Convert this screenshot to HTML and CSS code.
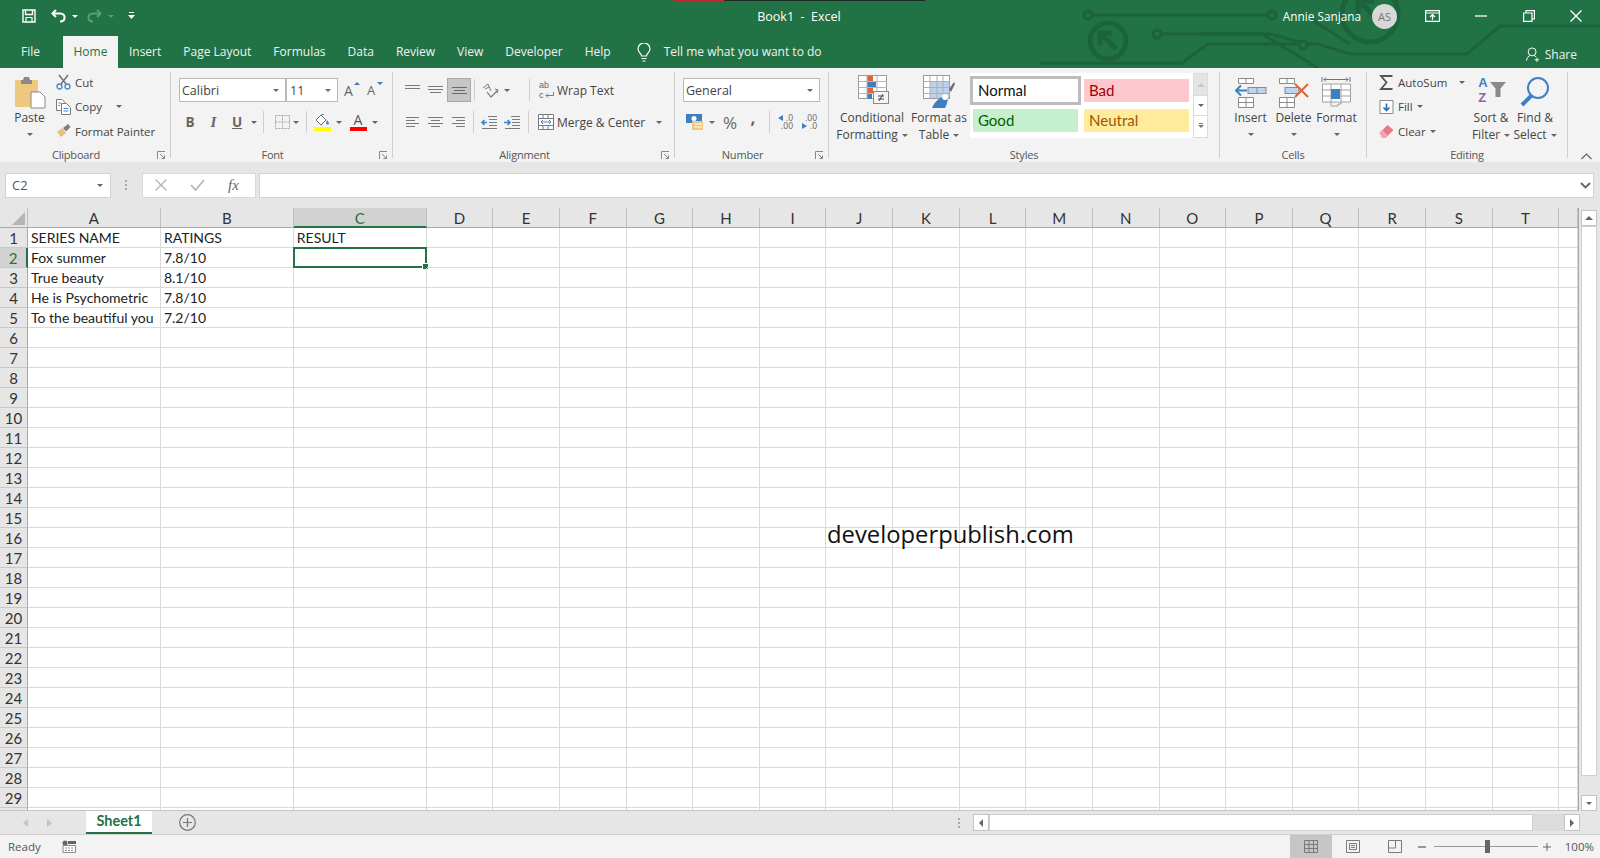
FILE: index.html
```html
<!DOCTYPE html>
<html lang="en">
<head>
    <meta charset="UTF-8">
    <title>Book1 - Excel</title>
    <link rel="stylesheet" href="styles.css">
</head>
<body>
<div class="app">
    <div class="top">
        <svg class="circuit" width="560" height="68" viewBox="1040 0 560 68" fill="none" stroke="#1d6339" stroke-width="3">
            <circle cx="1088" cy="15" r="4"/><path d="M1092 15H1268"/><circle cx="1272" cy="15" r="4"/>
            <circle cx="1157" cy="34" r="4"/><path d="M1161 34H1262L1318 68"/>
            <path d="M1040 63H1182L1208 44H1299"/><circle cx="1303" cy="45" r="4"/><path d="M1307 44H1318L1350 54H1467L1500 26H1600"/>
            <path d="M1200 34H1270L1300 42"/><path d="M1306 16L1350 44"/>
            <circle cx="1108" cy="41" r="18" stroke-width="5"/><path d="M1116 49L1102 35M1100 45V33H1112" stroke-width="5"/>
            <circle cx="1370" cy="14" r="28" stroke-width="5"/><path d="M1382 24L1362 4M1358 16V1H1374" stroke-width="5"/>
        </svg>

        <!-- Title bar -->
        <header class="titlebar">
            <div class="title-strip"></div>
            <div class="qat">
                <svg class="qat-save" width="14" height="14" viewBox="0 0 14 14" fill="none" stroke="#fff" stroke-width="1.4"><path d="M1 1H13V13H1Z"/><path d="M3.5 1V5.5H10.5V1"/><path d="M4 13V8.500H10V13" stroke-width="1.200"/></svg>
                <svg class="qat-undo" width="15" height="14" viewBox="0 0 15 14" fill="none" stroke="#fff" stroke-width="2"><path d="M5 1L1.500 4.500L5 8"/><path d="M2 4.500H9.500C15 4.500 15 12.500 9 12.500"/></svg>
                <span class="caret caret-white qat-caret"></span>
                <svg class="qat-redo" width="15" height="14" viewBox="0 0 15 14" fill="none" stroke="#5d9a78" stroke-width="2"><path d="M10 1L13.500 4.500L10 8"/><path d="M13 4.500H5.500C0 4.500 0 12.500 6 12.500"/></svg>
                <span class="caret caret-dim qat-caret"></span>
                <svg class="qat-more" width="7" height="8" viewBox="0 0 7 8" fill="#fff"><path d="M1 0H6V1H1ZM0 3H7L3.500 7Z"/></svg>
            </div>
            <div class="doc-title">Book1&nbsp; -&nbsp; Excel</div>
            <div class="account">
                <span class="account-name">Annie Sanjana</span>
                <span class="avatar">AS</span>
                <svg class="win-display" width="15" height="12" viewBox="0 0 15 12" fill="none" stroke="#fff" stroke-width="1.200"><path d="M.6.6H14.400V11.400H.6ZM.6 3H14.400"/><path d="M7.500 10V5M5 7L7.500 4.500L10 7" /></svg>
                <svg class="win-min" width="12" height="2" viewBox="0 0 12 2"><path d="M0 1H12" stroke="#fff" stroke-width="1.300"/></svg>
                <svg class="win-restore" width="12" height="12" viewBox="0 0 12 12" fill="none" stroke="#fff" stroke-width="1.200"><path d="M.6 3H9V11.400H.6Z"/><path d="M3 3V.6H11.400V9H9"/></svg>
                <svg class="win-close" width="12" height="12" viewBox="0 0 12 12" stroke="#fff" stroke-width="1.400"><path d="M.5.5L11.500 11.500M11.500.5L.5 11.500"/></svg>
            </div>
        </header>

        <!-- Ribbon tabs -->
        <nav class="tabs">
            <span class="tab tab-file">File</span>
            <span class="tab tab-active">Home</span>
            <span class="tab">Insert</span>
            <span class="tab">Page Layout</span>
            <span class="tab">Formulas</span>
            <span class="tab">Data</span>
            <span class="tab">Review</span>
            <span class="tab">View</span>
            <span class="tab">Developer</span>
            <span class="tab">Help</span>
            <svg class="bulb" width="14" height="19" viewBox="0 0 14 19" fill="none" stroke="#fff" stroke-width="1.200"><path d="M4.500 13C4.500 10 1 9.500 1 6A6 6 0 0 1 13 6C13 9.500 9.500 10 9.500 13Z"/><path d="M4.500 15.500H9.500M5.500 18H8.500"/></svg>
            <span class="tell">Tell me what you want to do</span>
            <span class="share">
                <svg width="14" height="17" viewBox="0 0 16 18" fill="none" stroke="#fff" stroke-width="1.100"><circle cx="7" cy="6" r="4.500"/><path d="M.6 16C1 12 3.500 10.500 5 10M9 10C10 10.300 11 11 11.500 11.800"/><path d="M12.500 12.500V17.500M10 15H15"/></svg>
                Share
            </span>
        </nav>
    </div>

    <!-- Ribbon -->
    <section class="ribbon">
        <div class="group group-clipboard">
            <div class="group-body">
                <div class="big-btn big-paste">
                    <svg class="big-icon" width="32" height="34" viewBox="0 0 32 34"><rect x="1" y="5" width="23" height="27" rx="1" fill="#edc87f"/><path d="M7 5H9L10 2H15L16 5H18V9H7Z" fill="#8a8a8a"/><path d="M17 17H26L31 22V33H17Z" fill="#fff" stroke="#8a8a8a"/></svg>
                    <span>Paste</span>
                    <span class="caret"></span>
                </div>
                <div class="small-col">
                    <div class="small-row">
                        <svg class="small-icon" width="15" height="16" viewBox="0 0 15 16" fill="none" stroke="#6b6b6b"><path d="M3 1L10 10M12 1L5 10" stroke-width="1.300"/><circle cx="3.500" cy="12.500" r="2.500" stroke="#4a86c5" stroke-width="1.300"/><circle cx="11.500" cy="12.500" r="2.500" stroke="#4a86c5" stroke-width="1.300"/></svg>
                        <span>Cut</span>
                    </div>
                    <div class="small-row">
                        <svg class="small-icon" width="15" height="16" viewBox="0 0 15 16" fill="#fff" stroke="#7b7b7b"><path d="M.5.5H6L9 3.500V11.500H.5Z"/><path d="M5.500 4.500H10.500L14.500 8.500V15.500H5.500Z"/><path d="M2.500 4H5M2.500 6.500H4M7.500 9.500H12.500M7.500 12H12.500" stroke="#4a86c5"/></svg>
                        <span>Copy</span>
                        <span class="caret caret-copy"></span>
                    </div>
                    <div class="small-row">
                        <svg class="small-icon" width="15" height="14" viewBox="0 0 15 14"><path d="M1 8L6 4L10 9L5 13Z" fill="#eac17a"/><path d="M7 4L12 0L14.500 3L10 7.500Z" fill="#7d7d7d"/></svg>
                        <span>Format Painter</span>
                    </div>
                </div>
            </div>
            <div class="group-label">Clipboard<svg class="launcher" width="8" height="8" viewBox="0 0 8 8" fill="none" stroke="#888"><path d="M.5 8V.5H8M3 3L7.500 7.500M4.500 7.500H7.500V4.500"/></svg></div>
        </div>

        <div class="group group-font">
            <div class="group-body two-rows">
                <div class="tool-row">
                    <div class="combo combo-font">Calibri<span class="caret"></span></div>
                    <div class="combo combo-size">11<span class="caret"></span></div>
                    <span class="grow-font">A<i class="tick tick-up"></i></span>
                    <span class="grow-font grow-small">A<i class="tick tick-down"></i></span>
                </div>
                <div class="tool-row">
                    <span class="tb tb-b">B</span>
                    <span class="tb tb-i">I</span>
                    <span class="tb tb-u">U</span>
                    <span class="caret-box"><span class="caret"></span></span>
                    <span class="sep sep-borders"></span>
                    <svg class="ic-borders" width="15" height="14" viewBox="0 0 15 14" fill="none" stroke="#a8a8a8" stroke-dasharray="2 1"><path d="M.5.5H14.500V13.500H.5ZM7.500.5V13.500M.5 7H14.500"/></svg>
                    <span class="caret-box caret-borders"><span class="caret"></span></span>
                    <span class="sep sep-fill"></span>
                    <span class="tb-color">
                        <svg width="16" height="12" viewBox="0 0 16 12" fill="none"><path d="M2 6L7 1L12 6L7 11Z" fill="#fff" stroke="#6e6e6e"/><path d="M13 6L15 9C15 11 12 11 12 9Z" fill="#4a86c5"/><path d="M7 1L10 0" stroke="#4a86c5"/></svg>
                        <i class="swatch swatch-yellow"></i>
                    </span>
                    <span class="caret-box"><span class="caret"></span></span>
                    <span class="tb-color tb-fontcolor">
                        <span class="letter-a">A</span>
                        <i class="swatch swatch-red"></i>
                    </span>
                    <span class="caret-box"><span class="caret"></span></span>
                </div>
            </div>
            <div class="group-label">Font<svg class="launcher" width="8" height="8" viewBox="0 0 8 8" fill="none" stroke="#888"><path d="M.5 8V.5H8M3 3L7.500 7.500M4.500 7.500H7.500V4.500"/></svg></div>
        </div>

        <div class="group group-align">
            <div class="group-body two-rows">
                <div class="tool-row">
                    <span class="al"><svg width="15" height="10" viewBox="0 0 15 10" stroke="#7a7a7a"><path d="M0 .5H15M0 3.500H15"/></svg></span>
                    <span class="al"><svg width="15" height="10" viewBox="0 0 15 10" stroke="#7a7a7a"><path d="M0 1.500H15M0 4.500H15M2 7.500H13"/></svg></span>
                    <span class="al al-on"><svg width="15" height="10" viewBox="0 0 15 10" stroke="#6a6a6a"><path d="M0 2.500H15M2 5.500H13M0 8.500H15"/></svg></span>
                    <span class="sep sep-align"></span>
                    <span class="al-orient"><svg width="17" height="15" viewBox="0 0 17 15" fill="none" stroke="#7a7a7a"><path d="M1 5L6 1L9 8M3 6L7 4" /><path d="M5 9L9 14L16 7" stroke-width="1.200"/><path d="M13 6L16 7L15 10" stroke="#4a86c5"/></svg></span>
                    <span class="caret-box"><span class="caret"></span></span>
                    <span class="sep sep-wrap"></span>
                    <span class="wide-btn wrap-btn">
                        <span class="wrap-glyph"><i>ab</i><i>c</i><svg width="9" height="6" viewBox="0 0 9 6" fill="none" stroke="#4a86c5"><path d="M8.500 0V3.500H1M3 1.500L1 3.500L3 5.500"/></svg></span>
                        <span>Wrap Text</span>
                    </span>
                </div>
                <div class="tool-row">
                    <span class="al"><svg width="13" height="10" viewBox="0 0 13 10" stroke="#7a7a7a"><path d="M0 .5H13M0 3.500H9M0 6.500H13M0 9.500H9"/></svg></span>
                    <span class="al"><svg width="15" height="10" viewBox="0 0 15 10" stroke="#7a7a7a"><path d="M0 .5H15M3 3.500H12M0 6.500H15M3 9.500H12"/></svg></span>
                    <span class="al"><svg width="13" height="10" viewBox="0 0 13 10" stroke="#7a7a7a"><path d="M0 .5H13M4 3.500H13M0 6.500H13M4 9.500H13"/></svg></span>
                    <span class="sep sep-align"></span>
                    <span class="al"><svg width="16" height="13" viewBox="0 0 16 13" fill="none" stroke="#7a7a7a"><path d="M7 .5H16M8 3.500H16M8 6.500H16M8 9.500H16M1 12.500H16"/><path d="M6 6.500H1M3.500 4L1 6.500L3.500 9" stroke="#3e7fc2" stroke-width="1.500"/></svg></span>
                    <span class="al"><svg width="16" height="13" viewBox="0 0 16 13" fill="none" stroke="#7a7a7a"><path d="M7 .5H16M8 3.500H16M8 6.500H16M8 9.500H16M1 12.500H16"/><path d="M0 6.500H6M3.500 4L6 6.500L3.500 9" stroke="#3e7fc2" stroke-width="1.500"/></svg></span>
                    <span class="sep sep-merge"></span>
                    <span class="wide-btn merge-btn">
                        <svg width="16" height="16" viewBox="0 0 16 16" fill="#fff" stroke="#7a7a7a"><path d="M.5.5H15.500V15.500H.5ZM.5 4.500H15.500M.5 11.500H15.500M5 .5V4.500M10 .5V4.500M5 11.500V15.500M10 11.500V15.500"/><path d="M3 8H13M5 6L3 8L5 10M11 6L13 8L11 10" stroke="#4a86c5" fill="none"/></svg>
                        <span>Merge &amp; Center</span>
                        <span class="caret caret-merge"></span>
                    </span>
                </div>
            </div>
            <div class="group-label">Alignment<svg class="launcher" width="8" height="8" viewBox="0 0 8 8" fill="none" stroke="#888"><path d="M.5 8V.5H8M3 3L7.500 7.500M4.500 7.500H7.500V4.500"/></svg></div>
        </div>

        <div class="group group-number">
            <div class="group-body two-rows">
                <div class="tool-row">
                    <div class="combo combo-number">General<span class="caret"></span></div>
                </div>
                <div class="tool-row">
                    <svg class="ic-money" width="18" height="16" viewBox="0 0 18 16"><rect x="0" y="0" width="16" height="9" fill="#3e7fc2"/><circle cx="8" cy="4.500" r="2.500" fill="#fff"/><rect x="6" y="7" width="11" height="9" fill="#f2c77c"/><path d="M8 10H16M8 13H16" stroke="#fff"/></svg>
                    <span class="caret-box caret-money"><span class="caret"></span></span>
                    <span class="num-percent">%</span>
                    <span class="num-comma">,</span>
                    <span class="sep sep-dec"></span>
                    <span class="dec dec-first"><i class="dec-row"><b class="arrow-l"></b>.0</i><i class="dec-row">.00</i></span>
                    <span class="dec dec-second"><i class="dec-row">.00</i><i class="dec-row"><b class="arrow-r"></b>.0</i></span>
                </div>
            </div>
            <div class="group-label">Number<svg class="launcher" width="8" height="8" viewBox="0 0 8 8" fill="none" stroke="#888"><path d="M.5 8V.5H8M3 3L7.500 7.500M4.500 7.500H7.500V4.500"/></svg></div>
        </div>

        <div class="group group-styles">
            <div class="group-body styles-body">
                <div class="big-btn big-cf">
                    <svg class="big-icon icon-cf" width="32" height="34" viewBox="0 0 32 34" fill="none"><rect x=".5" y=".5" width="28" height="23" fill="#fff" stroke="#9a9a9a"/><rect x="9" y="1" width="6" height="5" fill="#d9653b"/><rect x="9" y="7" width="9" height="5" fill="#3e7fc2"/><rect x="9" y="13" width="6" height="5" fill="#d9653b"/><rect x="9" y="19" width="5" height="5" fill="#3e7fc2"/><path d="M9 .5V24M19 .5V24M.5 6.500H29M.5 12.500H29M.5 18.500H29" stroke="#b5b5b5"/><rect x="15.500" y="16.500" width="15" height="12" fill="#f5f5f5" stroke="#8a8a8a"/><path d="M20 21H26M20 24H26M25 19L21 26" stroke="#444"/></svg>
                    <span>Conditional</span>
                    <span>Formatting<span class="caret caret-inline"></span></span>
                </div>
                <div class="big-btn big-fat">
                    <svg class="big-icon" width="32" height="34" viewBox="0 0 32 34" fill="none"><rect x=".5" y=".5" width="26" height="23" fill="#fff" stroke="#9a9a9a"/><rect x="7" y="7" width="19" height="16" fill="#bcd0ea"/><path d="M7 .5V24M14 .5V24M20 .5V24M.5 6.500H27M.5 12.500H27M.5 18.500H27" stroke="#b0b0b0"/><path d="M26 14L31 7L32 9L28 17Z" fill="#6f6f6f"/><path d="M9 33C12 26 17 22 22 21C26 22 25 27 22 33Z" fill="#3e7fc2"/><circle cx="22" cy="22" r="3" fill="#fff"/></svg>
                    <span>Format as</span>
                    <span>Table<span class="caret caret-inline"></span></span>
                </div>
                <div class="gallery">
                    <div class="gallery-grid">
                        <div class="style-cell style-normal">Normal</div>
                        <div class="style-cell style-bad">Bad</div>
                        <div class="style-cell style-good">Good</div>
                        <div class="style-cell style-neutral">Neutral</div>
                    </div>
                    <div class="gallery-scroll">
                        <span class="gs-btn gs-up"><i class="tri-up"></i></span>
                        <span class="gs-btn gs-down"><span class="caret"></span></span>
                        <span class="gs-btn gs-more"><span class="caret caret-more"></span></span>
                    </div>
                </div>
            </div>
            <div class="group-label">Styles</div>
        </div>

        <div class="group group-cells">
            <div class="group-body cells-body">
                <div class="big-btn big-cell">
                    <svg class="big-icon" width="32" height="32" viewBox="0 0 32 32" fill="none" stroke="#8a8a8a"><path d="M3.500 2.500H18.500V7.500H3.500ZM11 2.500V7.500M3.500 21.500H18.500V31.500H3.500ZM3.500 26.500H18.500M11 21.500V31.500" fill="#fff"/><rect x="13" y="11.500" width="18" height="6" fill="#bcd4ec" stroke="#8a8a8a"/><path d="M22 11.500V17.500"/><path d="M1 14.500H12M6 9.500L1 14.500L6 19.500" stroke="#3e7fc2" stroke-width="2"/></svg>
                    <span>Insert</span>
                    <span class="caret"></span>
                </div>
                <div class="big-btn big-cell">
                    <svg class="big-icon" width="32" height="32" viewBox="0 0 32 32" fill="none" stroke="#8a8a8a"><path d="M1.500 2.500H16.500V7.500H1.500ZM9 2.500V7.500M1.500 21.500H16.500V31.500H1.500ZM1.500 26.500H16.500M9 21.500V31.500" fill="#fff"/><rect x="7" y="11.500" width="14" height="6" fill="#bcd4ec" stroke="#8a8a8a"/><path d="M17 8L30 21M30 8L17 21" stroke="#d9653b" stroke-width="2"/></svg>
                    <span>Delete</span>
                    <span class="caret"></span>
                </div>
                <div class="big-btn big-cell">
                    <svg class="big-icon" width="32" height="32" viewBox="0 0 32 32" fill="none" stroke="#a0a0a0"><path d="M1 1V6M29 1V6M3 3.500H27M5 1.500L3 3.500L5 5.500M25 1.500L27 3.500L25 5.500" stroke="#3e7fc2"/><path d="M1.500 8H29.500V26H1.500ZM10 8V26M20 8V26M1.500 14H29.500M1.500 20H29.500" fill="#fff"/><rect x="10" y="13" width="9" height="10" fill="#3e7fc2" stroke="none"/><path d="M10 26V30H17V28H20V26"/></svg>
                    <span>Format</span>
                    <span class="caret"></span>
                </div>
            </div>
            <div class="group-label">Cells</div>
        </div>

        <div class="group group-editing">
            <div class="group-body">
                <div class="small-col editing-col">
                    <div class="small-row">
                        <svg class="edit-icon" width="14" height="15" viewBox="0 0 14 15" fill="none" stroke="#555" stroke-width="1.800"><path d="M13 1H1.500L7 7.500L1.500 14H13"/></svg>
                        <span>AutoSum</span>
                        <span class="caret caret-autosum"></span>
                    </div>
                    <div class="small-row">
                        <svg class="edit-icon" width="14" height="14" viewBox="0 0 14 14" fill="#fff"><path d="M.5.5H13.500V13.500H.5Z" stroke="#888"/><path d="M7 3.500V10M4 7.500L7 10.500L10 7.500" fill="none" stroke="#2f6fb3" stroke-width="1.700"/></svg>
                        <span>Fill</span>
                        <span class="caret caret-inline"></span>
                    </div>
                    <div class="small-row">
                        <svg class="edit-icon" width="14" height="13" viewBox="0 0 14 13"><path d="M0 8L8 0L14 5L6 13H3Z" fill="#e8798c"/><path d="M0 8L3 5L8 10L6 13H3Z" fill="#f2a6b2"/></svg>
                        <span>Clear</span>
                        <span class="caret caret-inline"></span>
                    </div>
                </div>
                <div class="big-btn big-edit">
                    <span class="az">
                        <span class="az-letters"><i class="az-a">A</i><i class="az-z">Z</i></span>
                        <svg width="16" height="15" viewBox="0 0 16 15"><path d="M0 0H16L10.500 6.500V15H5.500V6.500Z" fill="#8a8a8a"/></svg>
                    </span>
                    <span>Sort &amp;</span>
                    <span>Filter<span class="caret caret-inline"></span></span>
                </div>
                <div class="big-btn big-edit">
                    <svg class="big-icon" width="32" height="32" viewBox="0 0 32 32" fill="none"><circle cx="19" cy="12" r="10" stroke="#3e7fc2" stroke-width="2"/><path d="M12 20L3 29" stroke="#3e7fc2" stroke-width="4"/></svg>
                    <span>Find &amp;</span>
                    <span>Select<span class="caret caret-inline"></span></span>
                </div>
            </div>
            <div class="group-label">Editing</div>
        </div>

        <svg class="collapse" width="11" height="7" viewBox="0 0 11 7" fill="none" stroke="#666" stroke-width="1.200"><path d="M.5 6L5.500 1L10.500 6"/></svg>
    </section>

    <!-- Formula bar -->
    <section class="formula-bar">
        <div class="name-box">C2<span class="caret"></span></div>
        <span class="fb-dots"><i></i><i></i><i></i></span>
        <div class="fb-buttons">
            <svg width="12" height="12" viewBox="0 0 12 12" stroke="#b5b5b5" stroke-width="1.400"><path d="M.5.5L11.500 11.500M11.500.5L.5 11.500"/></svg>
            <svg width="15" height="12" viewBox="0 0 15 12" fill="none" stroke="#b5b5b5" stroke-width="1.800"><path d="M1 6L5.500 11L14 1"/></svg>
            <span class="fx">fx</span>
        </div>
        <div class="formula-input"><svg width="11" height="7" viewBox="0 0 11 7" fill="none" stroke="#666" stroke-width="1.800"><path d="M1 1L5.500 5.500L10 1"/></svg></div>
    </section>

    <!-- Sheet -->
    <main class="sheet-area">
        <div class="sheet-wrap">
            <div class="sheet" id="sheet"></div>
            <div class="watermark">developerpublish.com</div>
        </div>
        <div class="vscroll">
            <span class="sb-btn"><i class="tri-up"></i></span>
            <span class="sb-thumb"></span>
            <span class="sb-btn sb-down"><span class="caret"></span></span>
        </div>
    </main>

    <!-- Sheet tabs -->
    <section class="sheet-tabs">
        <i class="nav-tri nav-left"></i>
        <i class="nav-tri nav-right"></i>
        <span class="sheet-tab">Sheet1</span>
        <svg class="add-sheet" width="17" height="17" viewBox="0 0 17 17" fill="none" stroke="#777" stroke-width="1.200"><circle cx="8.500" cy="8.500" r="7.800"/><path d="M8.500 4V13M4 8.500H13"/></svg>
        <span class="hs-dots"><i></i><i></i><i></i></span>
        <div class="hscroll">
            <span class="hs-btn"><i class="tri-left"></i></span>
            <span class="hs-thumb"></span>
            <span class="hs-btn hs-end"><i class="tri-right"></i></span>
        </div>
    </section>

    <!-- Status bar -->
    <footer class="statusbar">
        <span class="ready">Ready</span>
        <svg class="macro" width="14" height="13" viewBox="0 0 14 13"><circle cx="3" cy="3" r="2.500" fill="#666"/><rect x="6" y="1" width="8" height="3" fill="#666"/><path d="M1 5.500H13.500V12.500H1Z" fill="#fff" stroke="#888"/><path d="M3 8H12M3 10.500H12" stroke="#888" stroke-dasharray="2 1"/></svg>
        <div class="view-btn view-on"><svg width="14" height="13" viewBox="0 0 14 13" fill="none" stroke="#7a7a7a"><path d="M.5.5H13.500V12.500H.5ZM.5 4.500H13.500M.5 8.500H13.500M5 .5V12.500M9.500 .5V12.500"/></svg></div>
        <div class="view-btn"><svg width="14" height="13" viewBox="0 0 14 13" fill="none" stroke="#7a7a7a"><path d="M.5.5H13.500V12.500H.5ZM3.500 3.500H10.500V9.500H3.500ZM5 5.500H9M5 7.500H9"/></svg></div>
        <div class="view-btn"><svg width="14" height="13" viewBox="0 0 14 13" fill="none" stroke="#7a7a7a"><path d="M.5.5H13.500V12.500H.5ZM.5 8H7.500V.5"/></svg></div>
        <div class="zoom-slider">
            <svg width="8" height="2" viewBox="0 0 8 2"><path d="M0 1H8" stroke="#666" stroke-width="1.300"/></svg>
            <div class="zoom-track"><i class="zoom-knob"></i></div>
            <svg width="8" height="8" viewBox="0 0 8 8" stroke="#666" stroke-width="1"><path d="M0 4H8M4 0V8"/></svg>
        </div>
        <span class="zoom-pct">100%</span>
    </footer>
</div>
<script src="grid.js"></script>
</body>
</html>
```

FILE: styles.css
```css
/* Basic styling */
* {
    box-sizing: border-box;
}

body {
    margin: 0;
    height: 100vh;
    overflow: hidden;
    font-family: "Open Sans", "Noto Sans", sans-serif;
    font-size: 12px;
    color: #444;
    background-color: #fff;
}

i {
    font-style: normal;
}

.app {
    display: flex;
    flex-direction: column;
    height: 858px;
}

/* carets */
.caret {
    display: inline-block;
    width: 0;
    height: 0;
    border-left: 3.5px solid transparent;
    border-right: 3.5px solid transparent;
    border-top: 3.5px solid #666;
}

.caret-white {
    border-top-color: #fff;
}

.caret-dim {
    border-top-color: #5d9a78;
}

.caret-inline {
    margin-left: 4px;
    vertical-align: middle;
}

.caret-box {
    display: flex;
    align-items: center;
    justify-content: center;
    width: 10px;
    flex: none;
}

/* Title bar */
.top {
    position: relative;
    flex: none;
    height: 68px;
    background-color: #217346;
}

.circuit {
    position: absolute;
    top: 0;
    left: 1040px;
}

.titlebar {
    position: relative;
    display: grid;
    grid-template-columns: 1fr auto 1fr;
    align-items: center;
    height: 34px;
    padding-bottom: 2px;
    color: #fff;
}

.title-strip {
    position: absolute;
    top: 0;
    left: 674px;
    width: 251px;
    height: 1px;
    background: linear-gradient(to right, #c8282d 50px, #1d2b24 50px);
}

.qat {
    display: flex;
    align-items: center;
    padding-left: 22px;
}

.qat-undo {
    margin-left: 15px;
}

.qat-caret {
    margin-left: 6px;
}

.qat-redo {
    margin-left: 9px;
}

.qat-more {
    margin-left: 14px;
}

.doc-title {
    font-size: 12.5px;
    padding-right: 2px;
}

.account {
    display: flex;
    align-items: center;
    justify-content: flex-end;
    padding-right: 18px;
}

.account-name {
    font-size: 11.8px;
}

.avatar {
    display: flex;
    align-items: center;
    justify-content: center;
    width: 25px;
    height: 25px;
    margin-left: 11px;
    border-radius: 50%;
    background-color: #d8d8d8;
    color: #777;
    font-size: 11px;
}

.win-display {
    margin-left: 28px;
}

.win-min {
    margin-left: 35px;
}

.win-restore {
    margin-left: 36px;
}

.win-close {
    margin-left: 35px;
}

/* Tabs */
.tabs {
    position: relative;
    display: flex;
    align-items: flex-end;
    height: 34px;
    padding-left: 10px;
    color: #f1f1f1;
    font-size: 12px;
}

.tab {
    height: 32px;
    padding: 0 11px;
    line-height: 32px;
}

.tab-file {
    margin-right: 12px;
}

.tab-active {
    padding: 0 10.5px;
    background-color: #f3f3f3;
    color: #217346;
}

.bulb {
    align-self: center;
    margin: 2px 0 0 15px;
}

.tell {
    height: 32px;
    margin-left: 13px;
    line-height: 32px;
}

.share {
    display: flex;
    align-items: center;
    gap: 5px;
    height: 32px;
    margin: 0 0 -2px auto;
    padding-right: 23px;
    font-size: 12px;
}

/* Ribbon */
.ribbon {
    display: flex;
    flex: none;
    height: 94px;
    background-color: #f3f3f3;
}

.group {
    display: flex;
    flex-direction: column;
    flex: none;
    margin: 4px 0;
    border-right: 1px solid #cfcfcf;
}

.group-body {
    display: flex;
    flex: none;
    height: 70px;
    margin-top: -2px;
}

.group-label {
    position: relative;
    flex: none;
    height: 20px;
    margin-top: 5px;
    text-align: center;
    font-size: 11px;
    letter-spacing: -0.2px;
    line-height: 20px;
    color: #555;
}

.launcher {
    position: absolute;
    right: 5px;
    top: 6px;
}

.group-clipboard {
    width: 171px;
}

.group-clipboard .group-label,
.group-font .group-label,
.group-align .group-label,
.group-number .group-label {
    padding-right: 18px;
}

.group-font {
    width: 222px;
}

.group-align {
    width: 282px;
}

.group-number {
    width: 154px;
}

.group-styles {
    width: 391px;
}

.group-cells {
    width: 147px;
}

.group-editing {
    width: 201px;
}

.big-btn {
    display: flex;
    flex-direction: column;
    align-items: center;
    flex: none;
    line-height: 17px;
    white-space: nowrap;
    color: #444;
}

.big-icon {
    flex: none;
    height: 34px;
    margin: 5px 0 0;
}

.icon-cf {
    margin-left: 3px;
}

.big-paste {
    width: 53px;
    margin-left: 3px;
}

.big-paste .caret,
.big-cell .caret {
    margin-top: 7px;
}

.small-col {
    display: flex;
    flex-direction: column;
    font-size: 11.5px;
}

.small-row {
    display: flex;
    flex: none;
    align-items: center;
    height: 24.5px;
}

.small-icon {
    flex: none;
    width: 15px;
    margin-right: 4px;
}

.caret-copy {
    margin-left: 14px;
}

/* Two row groups */
.two-rows {
    flex-direction: column;
    gap: 8px;
    padding: 8px 0 0 8px;
}

.tool-row {
    display: flex;
    align-items: center;
    height: 24px;
}

.combo {
    display: flex;
    align-items: center;
    justify-content: space-between;
    height: 24px;
    padding: 0 6px 0 2px;
    background-color: #fff;
    border: 1px solid #b8b8b8;
    font-size: 12.5px;
    color: #444;
}

.combo-font {
    width: 107px;
}

.combo-size {
    width: 52px;
    padding-left: 3px;
}

.combo-number {
    width: 137px;
}

.grow-font {
    position: relative;
    width: 12px;
    margin-left: 6px;
    font-size: 14px;
    color: #666;
}

.grow-small {
    margin-left: 11px;
    font-size: 13px;
}

.tick {
    position: absolute;
    top: 1px;
    right: -4px;
    width: 0;
    height: 0;
    border-left: 3px solid transparent;
    border-right: 3px solid transparent;
}

.tick-up {
    border-bottom: 3px solid #3e7fc2;
}

.tick-down {
    border-top: 3px solid #3e7fc2;
}

.group-font .tool-row + .tool-row {
    margin-left: -1px;
}

.tb {
    flex: none;
    width: 24px;
    text-align: center;
    font-size: 13.5px;
    color: #666;
}

.tb-b {
    font-weight: 700;
}

.tb-i {
    width: 23px;
    font-style: italic;
    font-weight: 700;
    font-family: "Liberation Serif", serif;
    font-size: 15px;
}

.tb-u {
    font-weight: 700;
    text-decoration: underline;
}

.caret-box .caret {
    flex: none;
}

.sep {
    flex: none;
    width: 1px;
    height: 22px;
    background-color: #cfcfcf;
}

.sep-borders {
    margin: 0 3px 0 4px;
}

.ic-borders {
    flex: none;
    width: 15px;
    margin: 0 3px 0 8px;
}

.caret-borders {
    width: 6px;
    margin-left: 0;
}

.sep-fill {
    margin: 0 3px 0 7px;
}

.tb-color {
    display: flex;
    flex-direction: column;
    align-items: center;
    flex: none;
    width: 24px;
}

.tb-fontcolor {
    margin-left: 2px;
}

.letter-a {
    font-size: 14px;
    line-height: 13px;
    color: #555;
}

.swatch {
    display: block;
    width: 17px;
    height: 4px;
    margin-top: 1px;
}

.swatch-yellow {
    background-color: #ffff00;
}

.swatch-red {
    background-color: #ff0000;
}

.al {
    display: flex;
    align-items: center;
    justify-content: center;
    flex: none;
    width: 23px;
    height: 24px;
}

.al-on {
    width: 24px;
    background-color: #c6c6c6;
    border: 1px solid #aaa;
}

.sep-align {
    margin: 0 3px;
}

.al-orient {
    display: flex;
    justify-content: center;
    flex: none;
    width: 24px;
}

.sep-wrap {
    margin: 0 9px 0 17px;
}

.sep-merge {
    margin: 0 9px 0 5px;
}

.wide-btn {
    display: flex;
    align-items: center;
    gap: 3px;
    font-size: 12px;
}

.wrap-glyph {
    position: relative;
    display: flex;
    flex-direction: column;
    width: 15px;
    height: 21px;
    font-family: "Liberation Sans", sans-serif;
    font-size: 9px;
    line-height: 10.5px;
    color: #666;
}

.wrap-glyph svg {
    position: absolute;
    right: 0;
    bottom: 3px;
}

.caret-merge {
    margin-left: 8px;
}

.ic-money {
    flex: none;
    margin-left: 3px;
}

.caret-money {
    width: 16px;
}

.num-percent {
    flex: none;
    width: 20px;
    text-align: center;
    font-size: 17px;
    color: #666;
}

.num-comma {
    flex: none;
    width: 26px;
    margin-top: -10px;
    text-align: center;
    font-size: 17px;
    font-weight: 700;
    color: #666;
}

.sep-dec {
    margin-left: 3px;
}

.dec {
    display: flex;
    flex-direction: column;
    flex: none;
    width: 15px;
    font-size: 8.5px;
    line-height: 8px;
    text-align: right;
    color: #666;
}

.dec-first {
    margin-left: 8px;
}

.dec-second {
    margin-left: 9px;
}

.dec-row {
    display: block;
    position: relative;
}

.arrow-l,
.arrow-r {
    position: absolute;
    left: 0;
    top: 1px;
    width: 0;
    height: 0;
    border-top: 3px solid transparent;
    border-bottom: 3px solid transparent;
}

.arrow-l {
    border-right: 5px solid #3e7fc2;
}

.arrow-r {
    border-left: 5px solid #3e7fc2;
}

/* Styles gallery */
.styles-body {
    align-items: flex-start;
}

.big-cf {
    width: 66px;
    margin-left: 10px;
}

.big-fat {
    width: 64px;
    margin-left: 2px;
}

.gallery {
    display: flex;
    justify-content: space-between;
    width: 238px;
    height: 65px;
    margin: 3px 0 0 -1px;
    background-color: #fff;
}

.gallery-grid {
    display: grid;
    grid-template-columns: 105px 105px;
    grid-template-rows: 23px 23px;
    gap: 7px 6px;
    padding: 6px 0 0 3px;
}

.style-cell {
    padding-left: 5px;
    font-family: Lato, "Open Sans", sans-serif;
    font-size: 15px;
    line-height: 23px;
}

.style-normal {
    background-color: #fff;
    color: #111;
    box-shadow: 0 0 0 3px #bdbdbd;
}

.style-bad {
    background-color: #ffc7ce;
    color: #9c0006;
}

.style-good {
    background-color: #c6efce;
    color: #006100;
}

.style-neutral {
    background-color: #ffeb9c;
    color: #9c5700;
}

.gallery-scroll {
    display: flex;
    flex-direction: column;
    width: 15px;
    border: 1px solid #dcdcdc;
}

.gs-btn {
    display: flex;
    align-items: center;
    justify-content: center;
    height: 20px;
    border-bottom: 1px solid #dcdcdc;
}

.gs-up {
    height: 22px;
    background-color: #e4e4e4;
}

.gs-more {
    flex: 1;
    border-bottom: 0;
}

.caret-more {
    border-top-color: #777;
    box-shadow: 0 -3px 0 -1px #777;
}

.tri-up {
    width: 0;
    height: 0;
    border-left: 4px solid transparent;
    border-right: 4px solid transparent;
    border-bottom: 4px solid #666;
}

.gs-up .tri-up {
    border-bottom-color: #c9c9c9;
}

/* Cells and editing */
.big-cell {
    width: 43px;
}

.cells-body {
    padding-left: 9px;
}

.editing-col {
    width: 90px;
    margin-left: 12px;
}

.edit-icon {
    flex: none;
    width: 15px;
    margin-right: 4px;
}

.caret-autosum {
    margin-left: 12px;
}

.big-edit {
    width: 44px;
}

.az {
    display: flex;
    flex: none;
    align-items: flex-start;
    gap: 2px;
    height: 34px;
    margin: 5px 0 0 2px;
}

.az-letters {
    display: flex;
    flex-direction: column;
    font-family: "Liberation Sans", sans-serif;
    font-size: 13px;
    font-weight: 700;
    line-height: 15px;
}

.az-a {
    color: #3e7fc2;
}

.az-z {
    color: #8f5fb8;
}

.az svg {
    margin-top: 7px;
}

.collapse {
    align-self: flex-end;
    margin: 0 0 2px 13px;
}

/* Formula bar */
.formula-bar {
    display: flex;
    align-items: center;
    flex: none;
    height: 46px;
    padding: 0 6px 0 5px;
    background-color: #e6e6e6;
}

.name-box {
    display: flex;
    align-items: center;
    justify-content: space-between;
    width: 106px;
    height: 25px;
    padding: 0 7px 0 6px;
    background-color: #fff;
    border: 1px solid #d2d2d2;
    font-size: 13px;
    color: #555;
}

.fb-dots,
.hs-dots {
    display: flex;
    flex-direction: column;
    gap: 2px;
}

.fb-dots {
    margin: 0 15px 0 14px;
}

.fb-dots i,
.hs-dots i {
    display: block;
    width: 2px;
    height: 2px;
    background-color: #a8a8a8;
}

.fb-buttons {
    display: flex;
    align-items: center;
    gap: 23px;
    width: 114px;
    height: 25px;
    padding-left: 12px;
    background-color: #fff;
    border: 1px solid #d8d8d8;
}

.fx {
    font-family: "Liberation Serif", serif;
    font-style: italic;
    font-size: 15px;
    color: #666;
}

.formula-input {
    display: flex;
    align-items: center;
    justify-content: flex-end;
    flex: 1;
    height: 25px;
    margin-left: 3px;
    padding-right: 2px;
    background-color: #fff;
    border: 1px solid #d2d2d2;
}

/* Sheet */
.sheet-area {
    display: flex;
    flex: none;
    height: 603px;
}

.sheet-wrap {
    position: relative;
    flex: 1;
    overflow: hidden;
    border-right: 1px solid #a8a8a8;
    border-bottom: 1px solid #c4c4c4;
}

.sheet {
    display: grid;
    grid-template-columns: 28px repeat(3, 132.9px) repeat(17, 66.63px) 1fr;
    grid-auto-rows: 20px;
    font-family: Lato, "Open Sans", sans-serif;
    font-size: 14px;
    color: #222;
}

.cell {
    position: relative;
    padding-left: 3px;
    line-height: 19px;
    white-space: nowrap;
    border-right: 1px solid #dadada;
    border-bottom: 1px solid #dadada;
}

.col-head,
.row-head {
    padding: 0;
    text-align: center;
    background-color: #e6e6e6;
    border-right: 1px solid #bfbfbf;
    border-bottom: 1px solid #a8a8a8;
    color: #333;
    font-size: 15px;
}

.col-head {
    line-height: 21px;
}

.row-head {
    line-height: 21px;
    border-right-color: #a8a8a8;
    border-bottom-color: #c8c8c8;
}

.corner {
    background: #e6e6e6;
    border-right: 1px solid #bfbfbf;
    border-bottom: 1px solid #a8a8a8;
}

.corner::after {
    content: "";
    position: absolute;
    left: 12px;
    top: 4px;
    width: 13px;
    height: 13px;
    background-color: #b5b5b5;
    clip-path: polygon(100% 0, 100% 100%, 0 100%);
}

.col-head.is-active {
    background-color: #d2d2d2;
    color: #217346;
    border-bottom: 2px solid #217346;
}

.row-head.is-active {
    background-color: #d2d2d2;
    color: #217346;
    border-right: 2px solid #217346;
}

.cell.is-selected {
    border: 2px solid #217346;
    margin: -1px 0 0 -1px;
    width: calc(100% + 1px);
    height: 21px;
}

.cell.is-selected::after {
    content: "";
    position: absolute;
    right: -4px;
    bottom: -4px;
    width: 5px;
    height: 5px;
    background-color: #217346;
    border: 1px solid #fff;
}

.watermark {
    position: absolute;
    left: 827px;
    top: 310px;
    font-size: 23.8px;
    line-height: 32px;
    color: #111;
}

.vscroll {
    display: flex;
    flex-direction: column;
    width: 21px;
    padding: 2px 3px 0 2px;
    background-color: #e6e6e6;
}

.sb-btn {
    display: flex;
    align-items: center;
    justify-content: center;
    height: 16px;
    background-color: #fff;
    border: 1px solid #c4c4c4;
}

.sb-down {
    margin-top: auto;
}

.sb-thumb {
    height: 550px;
    background-color: #fff;
    border: 1px solid #d0d0d0;
}

/* Sheet tabs */
.sheet-tabs {
    display: flex;
    align-items: center;
    flex: none;
    height: 24px;
    background-color: #e6e6e6;
    border-bottom: 1px solid #cfcfcf;
}

.nav-tri {
    width: 0;
    height: 0;
    border-top: 4px solid transparent;
    border-bottom: 4px solid transparent;
}

.nav-left {
    margin-left: 23px;
    border-right: 5px solid #c4c4c4;
}

.nav-right {
    margin-left: 19px;
    border-left: 5px solid #c4c4c4;
}

.sheet-tab {
    height: 23px;
    width: 66px;
    margin: 0 0 0 34px;
    background-color: #fff;
    border-bottom: 2px solid #217346;
    text-align: center;
    font-family: Lato, "Open Sans", sans-serif;
    font-size: 14.5px;
    font-weight: 700;
    line-height: 20px;
    color: #217346;
}

.add-sheet {
    margin-left: 27px;
}

.hs-dots {
    margin-left: 762px;
}

.hscroll {
    display: flex;
    align-items: center;
    width: 607px;
    height: 17px;
    margin-left: 13px;
    background-color: #dcdcdc;
}

.hs-btn {
    display: flex;
    align-items: center;
    justify-content: center;
    flex: none;
    width: 16px;
    height: 17px;
    background-color: #fff;
    border: 1px solid #c4c4c4;
}

.hs-thumb {
    width: 544px;
    height: 17px;
    background-color: #fff;
    border: 1px solid #d0d0d0;
}

.hs-end {
    margin-left: auto;
}

.tri-left,
.tri-right {
    width: 0;
    height: 0;
    border-top: 4px solid transparent;
    border-bottom: 4px solid transparent;
}

.tri-left {
    border-right: 4px solid #666;
}

.tri-right {
    border-left: 4px solid #666;
}

/* Status bar */
.statusbar {
    display: flex;
    align-items: center;
    flex: 1;
    background-color: #f3f3f3;
    color: #555;
    font-size: 11.5px;
}

.ready {
    margin-left: 8px;
}

.macro {
    margin-left: 21px;
}

.view-btn {
    display: flex;
    align-items: center;
    justify-content: center;
    width: 42px;
    height: 100%;
}

.view-btn.view-on {
    margin-left: 1214px;
    background-color: #c6c6c6;
}

.zoom-slider {
    display: flex;
    align-items: center;
    gap: 5px;
    margin-left: 2px;
}

.zoom-track {
    position: relative;
    width: 104px;
    height: 1px;
    margin-left: 3px;
    background-color: #999;
}

.zoom-knob {
    position: absolute;
    left: 51px;
    top: -6px;
    width: 5px;
    height: 13px;
    background-color: #666;
}

.zoom-pct {
    margin-left: 14px;
}
```

FILE: grid.js
```js
// Builds the spreadsheet cells
const sheet = document.getElementById('sheet');
const columns = 'ABCDEFGHIJKLMNOPQRST'.split('');

const data = {
    1: ['SERIES NAME', 'RATINGS', 'RESULT'],
    2: ['Fox summer', '7.8/10'],
    3: ['True beauty', '8.1/10'],
    4: ['He is Psychometric', '7.8/10'],
    5: ['To the beautiful you', '7.2/10']
};

function addCell(className, text) {
    const cell = document.createElement('div');
    cell.className = className;
    cell.textContent = text || '';
    sheet.appendChild(cell);
}

addCell('cell corner');
columns.forEach(col => {
    addCell(col === 'C' ? 'cell col-head is-active' : 'cell col-head', col);
});
addCell('cell col-head');

for (let row = 1; row <= 30; row++) {
    const values = data[row] || [];
    addCell(row === 2 ? 'cell row-head is-active' : 'cell row-head', row < 30 ? row : '');
    for (let c = 0; c <= columns.length; c++) {
        const selected = row === 2 && c === 2;
        addCell(selected ? 'cell is-selected' : 'cell', values[c]);
    }
}
```
